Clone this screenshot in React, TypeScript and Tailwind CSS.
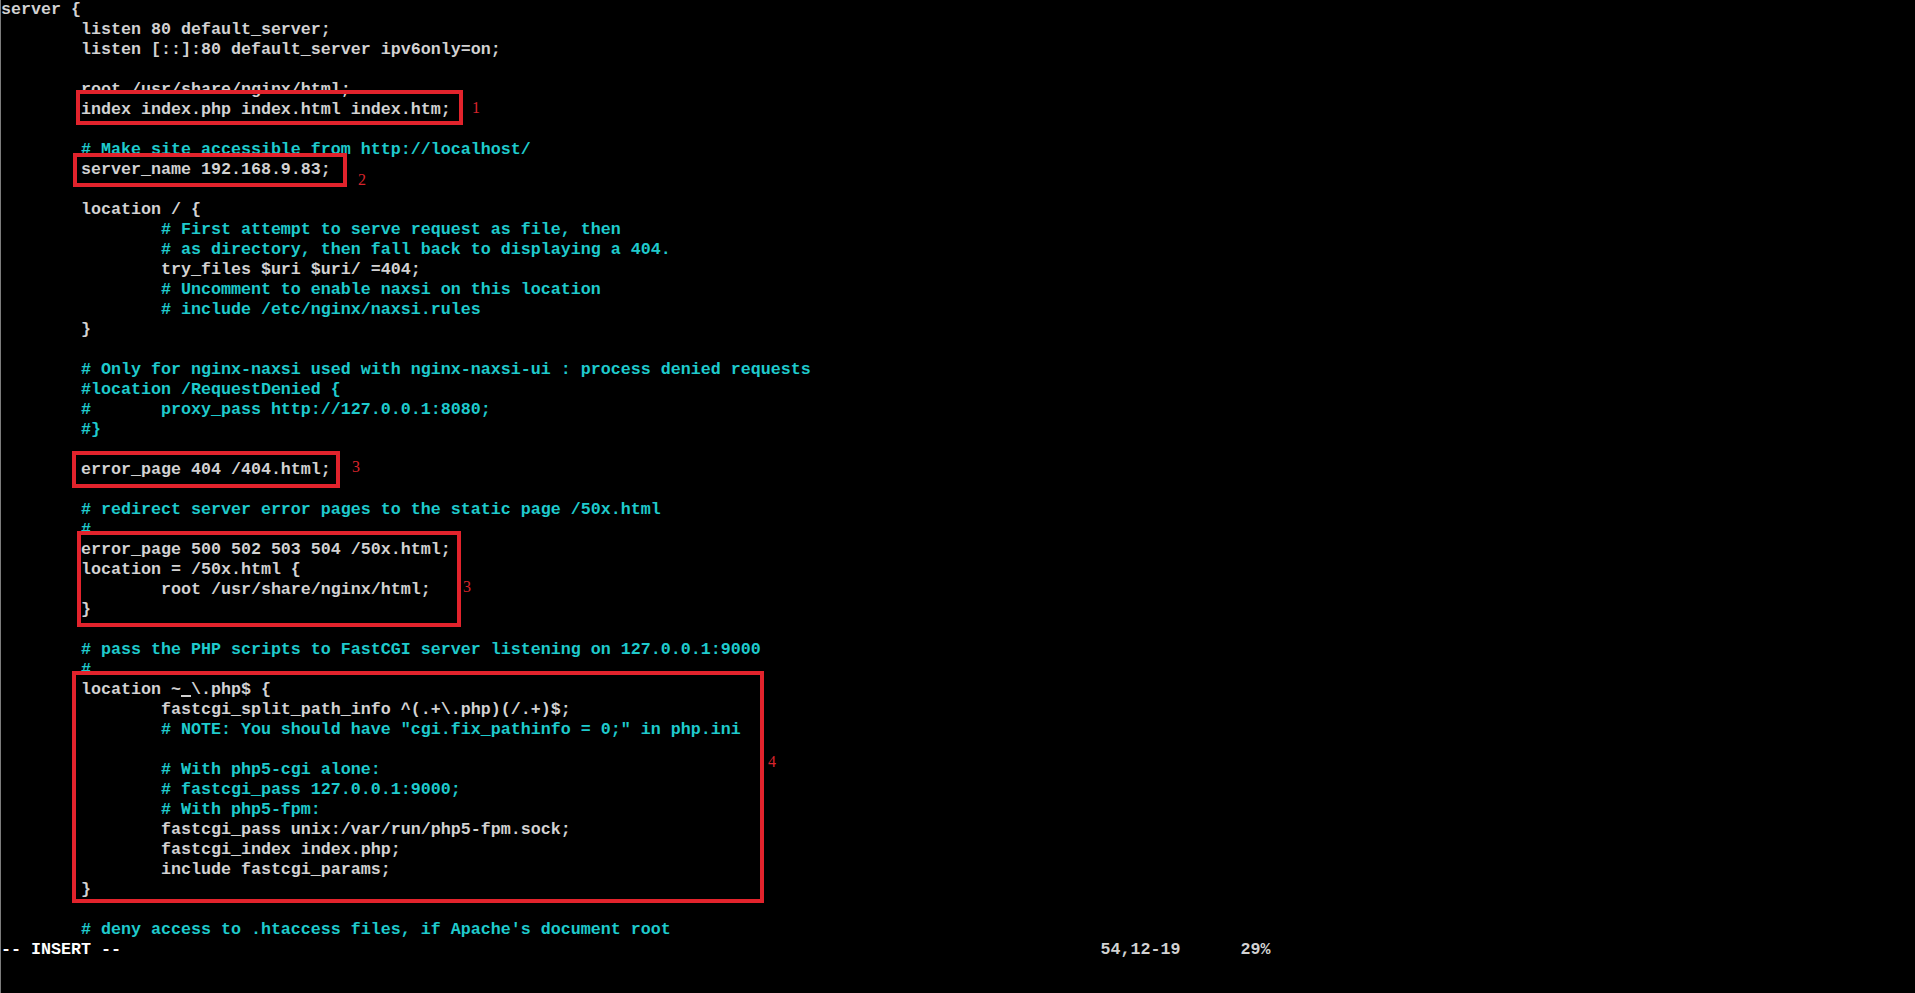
import React from "react";

type Line = { t: string; c?: "g" | "c" };

const T = "        ";
const TT = T + T;

const lines: Line[] = [
  { t: "server {" },
  { t: T + "listen 80 default_server;" },
  { t: T + "listen [::]:80 default_server ipv6only=on;" },
  { t: "" },
  { t: T + "root /usr/share/nginx/html;" },
  { t: T + "index index.php index.html index.htm;" },
  { t: "" },
  { t: T + "# Make site accessible from http://localhost/", c: "c" },
  { t: T + "server_name 192.168.9.83;" },
  { t: "" },
  { t: T + "location / {" },
  { t: TT + "# First attempt to serve request as file, then", c: "c" },
  { t: TT + "# as directory, then fall back to displaying a 404.", c: "c" },
  { t: TT + "try_files $uri $uri/ =404;" },
  { t: TT + "# Uncomment to enable naxsi on this location", c: "c" },
  { t: TT + "# include /etc/nginx/naxsi.rules", c: "c" },
  { t: T + "}" },
  { t: "" },
  { t: T + "# Only for nginx-naxsi used with nginx-naxsi-ui : process denied requests", c: "c" },
  { t: T + "#location /RequestDenied {", c: "c" },
  { t: T + "#       proxy_pass http://127.0.0.1:8080;", c: "c" },
  { t: T + "#}", c: "c" },
  { t: "" },
  { t: T + "error_page 404 /404.html;" },
  { t: "" },
  { t: T + "# redirect server error pages to the static page /50x.html", c: "c" },
  { t: T + "#", c: "c" },
  { t: T + "error_page 500 502 503 504 /50x.html;" },
  { t: T + "location = /50x.html {" },
  { t: TT + "root /usr/share/nginx/html;" },
  { t: T + "}" },
  { t: "" },
  { t: T + "# pass the PHP scripts to FastCGI server listening on 127.0.0.1:9000", c: "c" },
  { t: T + "#", c: "c" },
  { t: "__CURSOR__" },
  { t: TT + "fastcgi_split_path_info ^(.+\\.php)(/.+)$;" },
  { t: TT + '# NOTE: You should have "cgi.fix_pathinfo = 0;" in php.ini', c: "c" },
  { t: "" },
  { t: TT + "# With php5-cgi alone:", c: "c" },
  { t: TT + "# fastcgi_pass 127.0.0.1:9000;", c: "c" },
  { t: TT + "# With php5-fpm:", c: "c" },
  { t: TT + "fastcgi_pass unix:/var/run/php5-fpm.sock;" },
  { t: TT + "fastcgi_index index.php;" },
  { t: TT + "include fastcgi_params;" },
  { t: T + "}" },
  { t: "" },
  { t: T + "# deny access to .htaccess files, if Apache's document root", c: "c" },
];

function Box({ className }: { className: string }) {
  return <div className={"absolute border-[4px] border-[#e2232c] " + className} />;
}

function Label({ className, children }: { className: string; children: React.ReactNode }) {
  return (
    <div
      className={"absolute text-[16px] leading-none text-[#d8242c] " + className}
      style={{ fontFamily: '"Liberation Serif", serif' }}
    >
      {children}
    </div>
  );
}

export default function App() {
  return (
    <div className="relative w-full h-[993px] bg-black overflow-hidden border-l border-[#7c7c7c]">
      <div
        className="flex flex-col text-[16.67px] leading-[20px] font-bold whitespace-pre text-[#d2d2d2]"
        style={{ fontFamily: '"Liberation Mono", "DejaVu Sans Mono", monospace' }}
      >
        {lines.map((l, i) =>
          l.t === "__CURSOR__" ? (
            <div key={i} className="h-[20px]">
              {T + "location ~"}
              <span className="inline-block w-[10px] h-[17px] border-b-2 border-[#d2d2d2] align-top" />
              {"\\.php$ {"}
            </div>
          ) : (
            <div key={i} className={"h-[20px] " + (l.c === "c" ? "text-[#1fcacc]" : "")}>
              {l.t || " "}
            </div>
          )
        )}
        <div className="h-[20px]">
          <span className="text-white">-- INSERT --</span>
          {" ".repeat(98)}
          {"54,12-19"}
          {" ".repeat(6)}
          {"29%"}
        </div>
      </div>

      <Box className="left-[75px] top-[90px] w-[387px] h-[35px]" />
      <Label className="left-[471px] top-[100px]">1</Label>

      <Box className="left-[72px] top-[153px] w-[274px] h-[34px]" />
      <Label className="left-[357px] top-[172px]">2</Label>

      <Box className="left-[71px] top-[451px] w-[268px] h-[37px]" />
      <Label className="left-[351px] top-[459px]">3</Label>

      <Box className="left-[76px] top-[531px] w-[384px] h-[96px]" />
      <Label className="left-[462px] top-[579px]">3</Label>

      <Box className="left-[71px] top-[671px] w-[692px] h-[232px]" />
      <Label className="left-[767px] top-[754px]">4</Label>
    </div>
  );
}
